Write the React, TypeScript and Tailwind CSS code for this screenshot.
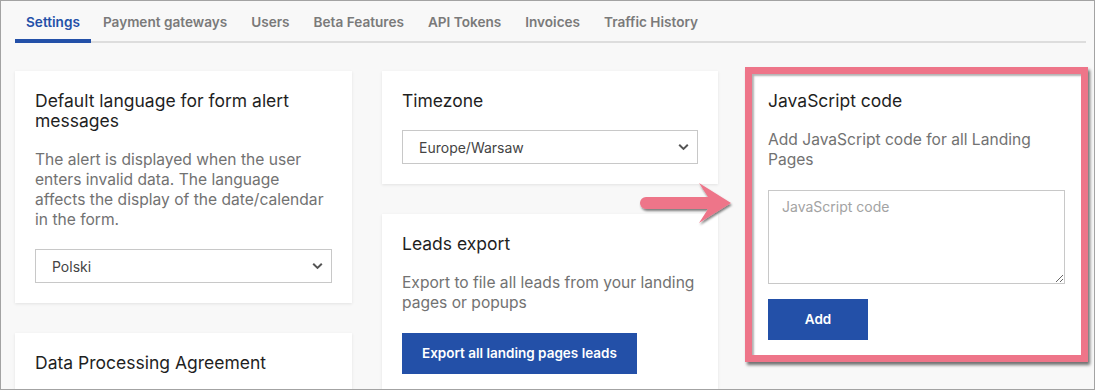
import React from "react"

const tabs = ["Settings", "Payment gateways", "Users", "Beta Features", "API Tokens", "Invoices", "Traffic History"]

function Chevron() {
    return (
        <svg className="absolute right-[9px] top-1/2 -translate-y-1/2 pointer-events-none" width="11" height="7" viewBox="0 0 11 7">
            <path d="M1.2 1.2 L5.5 5.4 L9.8 1.2" fill="none" stroke="#555" strokeWidth="2" />
        </svg>
    )
}

function Select({ value }: { value: string }) {
    return (
        <div className="relative mt-[19px] h-[34px]">
            <select
                defaultValue={value}
                className="appearance-none w-full h-full border border-[#c8c8c8] bg-white pl-4 text-[14px] text-[#444] outline-none"
            >
                <option>{value}</option>
            </select>
            <Chevron />
        </div>
    )
}

function Card({ children, className = "" }: { children: React.ReactNode; className?: string }) {
    return <div className={`bg-white shadow-[0_1px_3px_rgba(0,0,0,0.09)] px-5 pt-5 pb-5 ${className}`}>{children}</div>
}

function Title({ children }: { children: React.ReactNode }) {
    return <h3 className="text-[17.5px] leading-5 text-[#1f1f1f]">{children}</h3>
}

function Desc({ children, className = "mt-[19px]" }: { children: React.ReactNode; className?: string }) {
    return <p className={`text-[15.6px] leading-5 text-[#727272] ${className}`}>{children}</p>
}

export default function App() {
    return (
        <div className="relative w-[1095px] h-[390px] overflow-hidden border border-[#a3a3a3] bg-[#f8f8f8] font-['Inter','Liberation_Sans',sans-serif]">
            <div className="pl-[14px] pr-[8px]">
                {/* Tabs */}
                <div className="mt-[11px] flex border-b-2 border-[#dddddd]">
                    {tabs.map((t, i) => (
                        <div
                            key={t}
                            className={
                                i === 0
                                    ? "-mb-[2px] px-[11px] pb-[7px] text-[13.6px] leading-5 font-semibold text-[#2350a8] border-b-4 border-[#2350a8]"
                                    : "-mb-[2px] px-3 pb-[7px] text-[13.6px] leading-5 font-semibold text-[#7a7a7a] border-b-4 border-transparent"
                            }
                        >
                            {t}
                        </div>
                    ))}
                </div>

                {/* Columns */}
                <div className="mt-[28px] grid grid-cols-[337px_336px_337px] gap-[30px] items-start">
                    <div className="flex flex-col gap-[30px]">
                        <Card>
                            <Title>Default language for form alert messages</Title>
                            <Desc>
                                The alert is displayed when the user enters invalid data. The language affects the
                                display of the date/calendar in the form.
                            </Desc>
                            <Select value="Polski" />
                        </Card>
                        <Card className="h-[80px]">
                            <Title>Data Processing Agreement</Title>
                        </Card>
                    </div>

                    <div className="flex flex-col gap-[30px]">
                        <Card>
                            <Title>Timezone</Title>
                            <Select value="Europe/Warsaw" />
                        </Card>
                        <Card>
                            <Title>Leads export</Title>
                            <Desc>Export to file all leads from your landing pages or popups</Desc>
                            <button className="mt-5 h-[41px] px-5 bg-[#2350a8] text-white text-[13.5px] font-semibold">
                                Export all landing pages leads
                            </button>
                        </Card>
                    </div>

                    <div className="relative">
                        <Card className="!pb-[18px]">
                            <Title>JavaScript code</Title>
                            <Desc>Add JavaScript code for all Landing Pages</Desc>
                            <textarea
                                placeholder="JavaScript code"
                                className="mt-5 block w-full h-[94px] border border-[#c8c8c8] px-[13px] pt-[6px] text-[14px] leading-5 text-[#444] placeholder:text-[#a3a3a3] outline-none"
                            />
                            <button className="mt-[15px] h-[41px] w-[100px] bg-[#2350a8] text-white text-[13.5px] font-semibold">
                                Add
                            </button>
                        </Card>
                        {/* highlight frame */}
                        <div className="absolute -left-[3px] -right-[3px] -top-[4px] -bottom-[4px] border-[7px] border-[#ee7589] pointer-events-none shadow-[2px_3px_3px_rgba(0,0,0,0.55),inset_2px_2px_2px_rgba(0,0,0,0.3)]" />
                    </div>
                </div>
            </div>

            {/* pointer arrow */}
            <svg className="absolute left-[634px] top-[180px]" width="102" height="48" viewBox="0 0 102 48">
                <defs>
                    <filter id="sh" x="-10%" y="-20%" width="130%" height="150%">
                        <feDropShadow dx="1" dy="2" stdDeviation="1.2" floodColor="#000" floodOpacity="0.5" />
                    </filter>
                </defs>
                <path
                    d="M11 16 L73 16 L64 2 L96 22 L64 42 L73 28 L11 28 A6 6 0 0 1 11 16 Z"
                    fill="#ee7589"
                    filter="url(#sh)"
                />
            </svg>
        </div>
    )
}
